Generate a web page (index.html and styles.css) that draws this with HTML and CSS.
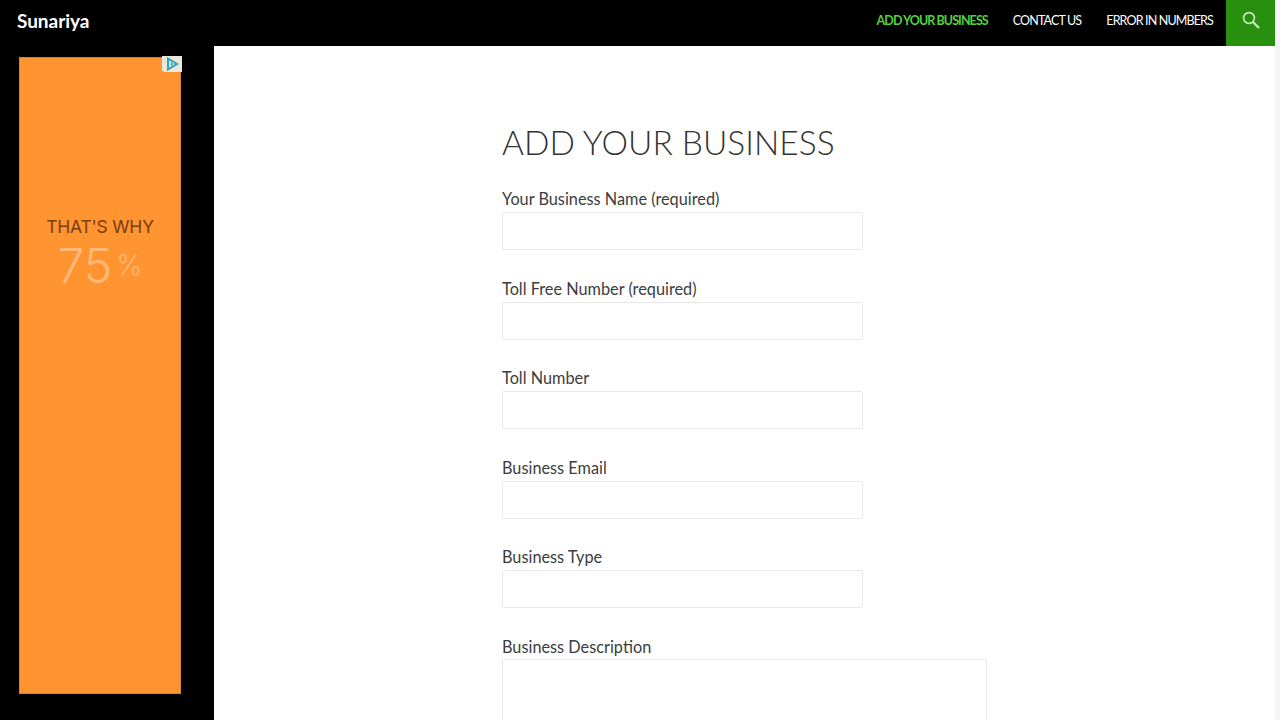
FILE: index.html
```html
<!DOCTYPE html>
<html lang="en">
<head>
<meta charset="utf-8">
<title>Add Your Business | Sunariya</title>
<link rel="stylesheet" href="styles.css">
</head>
<body>
<header class="topbar">
  <a class="brand" href="#">Sunariya</a>
  <nav class="nav">
    <a class="nav-link nav-current" href="#">ADD YOUR BUSINESS</a>
    <a class="nav-link" href="#">CONTACT US</a>
    <a class="nav-link" href="#">ERROR IN NUMBERS</a>
  </nav>
  <button class="search" type="button" aria-label="Search">
    <svg width="18" height="18" viewBox="0 0 18 18" fill="none" stroke="#cdeec2" stroke-width="1.6"><circle cx="7" cy="7" r="5.4"/><path d="M11 11l6 6" stroke-width="2.2"/></svg>
  </button>
</header>
<div class="page">
  <aside class="sidebar">
    <div class="ad">
      <span class="ad-badge">
        <svg width="14" height="14" viewBox="0 0 14 14" fill="none" stroke="#2ba6bd" stroke-width="2"><path d="M3 1.6l9 5.4-9 5.4z"/><path d="M5.8 5.2v3.6l2.8-1.8z" fill="#2ba6bd" stroke="none"/></svg>
      </span>
      <div class="ad-line">THAT'S WHY</div>
      <div class="ad-figure">75<span class="ad-percent">%</span></div>
    </div>
  </aside>
  <main class="content">
    <h1 class="title">ADD YOUR BUSINESS</h1>
    <form class="form">
      <label class="field">Your Business Name (required)<input class="input" type="text"></label>
      <label class="field">Toll Free Number (required)<input class="input" type="text"></label>
      <label class="field">Toll Number<input class="input" type="text"></label>
      <label class="field">Business Email<input class="input" type="text"></label>
      <label class="field">Business Type<input class="input" type="text"></label>
      <label class="field">Business Description<textarea class="textarea"></textarea></label>
    </form>
  </main>
</div>
</body>
</html>
```
FILE: styles.css
```css
* { box-sizing: border-box; }
html, body { margin: 0; height: 720px; overflow: hidden; }
body { background: #f6f6f6; font-family: Lato, "Liberation Sans", sans-serif; color: #2b2b2b; display: flex; flex-direction: column; padding-right: 5px; }
.topbar { height: 46px; flex: none; display: flex; align-items: center; padding: 0 0 0 17px; background: #000; }
.brand { color: #fff; font-size: 19px; font-weight: 700; text-decoration: none; margin-right: auto; padding-bottom: 6px; letter-spacing: -0.05px; }
.nav { display: flex; gap: 25px; margin-right: 13px; padding-bottom: 6px; }
.nav-link { color: #fff; font-size: 12.5px; font-weight: 400; text-decoration: none; letter-spacing: -0.85px; }
.nav-current { color: #55d13d; font-weight: 700; letter-spacing: -0.92px; }
.search { width: 49px; height: 46px; border: 0; padding: 0 0 6px; background: #28900f; display: flex; align-items: center; justify-content: center; }
.page { flex: 1; display: flex; min-height: 0; }
.sidebar { width: 214px; flex: none; padding: 11px 0 0 19px; background: #000; }
.ad { position: relative; width: 162px; height: 637px; background: #ff9431; border: 1px solid #d5813a; padding-top: 159px; text-align: center; }
.ad-badge { position: absolute; top: -2px; right: -2px; width: 20px; height: 16px; background: #ece7dc; border-bottom-left-radius: 3px; display: flex; align-items: center; justify-content: center; }
.ad-line { font-family: Inter, "Liberation Sans", sans-serif; font-size: 17.5px; line-height: 20px; color: #7c3c0b; letter-spacing: -0.2px; }
.ad-figure { font-family: Inter, "Liberation Sans", sans-serif; font-weight: 300; font-size: 48px; line-height: 44px; color: #ffb877; margin-top: 6px; }
.ad-percent { font-size: 28px; vertical-align: 8px; font-weight: 300; margin-left: 4px; }
.content { flex: 1; background: #fff; padding: 0 0 0 288px; min-width: 0; overflow: hidden; }
.title { margin: 75px 0 0; font-size: 33.5px; line-height: 42px; font-weight: 300; color: #333; }
.form { margin-top: 24px; display: flex; flex-direction: column; gap: 26.5px; }
.field { display: block; font-size: 16.3px; line-height: 24px; color: #3d3d3d; }
.input { display: block; width: 361px; height: 38px; border: 1px solid #e8e8e8; border-radius: 2px; background: #fff; margin-top: 1px; }
.textarea { display: block; width: 485px; height: 120px; border: 1px solid #e8e8e8; border-radius: 2px; background: #fff; resize: none; }
```
